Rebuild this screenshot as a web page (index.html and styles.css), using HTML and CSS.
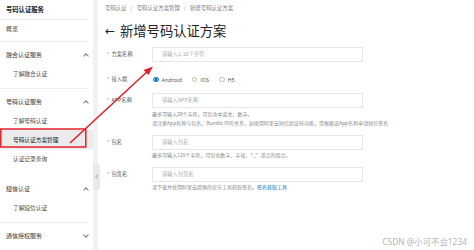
FILE: index.html
```html
<!DOCTYPE html>
<html lang="zh">
<head>
<meta charset="utf-8">
<link rel="stylesheet" href="styles.css">
</head>
<body>
<div class="page">
  <aside class="sidebar">
    <div class="side-title">号码认证服务</div>
    <div class="side-top">概览</div>
    <div class="group">
      <div class="group-head">融合认证服务<span class="chev up"></span></div>
      <div class="sub">了解融合认证</div>
    </div>
    <div class="group nodiv">
      <div class="group-head">号码认证服务<span class="chev up"></span></div>
      <div class="sub">了解号码认证</div>
      <div class="sub active">号码认证方案管理</div>
      <div class="sub">认证记录查询</div>
    </div>
    <div class="group">
      <div class="group-head">短信认证<span class="chev up"></span></div>
      <div class="sub">了解短信认证</div>
    </div>
    <div class="group">
      <div class="group-head">通信授权服务<span class="chev down"></span></div>
    </div>
  </aside>
  <div class="gutter"><div class="collapse-tab"><span class="tab-chev"></span></div></div>
  <main class="main">
    <div class="crumbs">号码认证<span class="sep">/</span>号码认证方案管理<span class="sep">/</span>新增号码认证方案</div>
    <h1 class="title"><span class="back">←</span>新增号码认证方案</h1>
    <div class="form">
      <div class="item">
        <div class="label"><i>*</i>方案名称</div>
        <div class="ctrl"><div class="input">请输入1-10个字符</div></div>
      </div>
      <div class="item radios-item">
        <div class="label"><i>*</i>接入端</div>
        <div class="ctrl radios">
          <span class="radio on"></span><span class="rtext">Android</span>
          <span class="radio"></span><span class="rtext">iOS</span>
          <span class="radio"></span><span class="rtext">H5</span>
        </div>
      </div>
      <div class="item">
        <div class="label"><i>*</i>APP名称</div>
        <div class="ctrl">
          <div class="input">请输入APP名称</div>
          <div class="help">最多可输入20个字符，可包含中英文、数字。</div>
          <div class="help">请注意App名称与包名、Bundle ID的关系，如使用阿里云短信验证码功能，需根据该App名称申请短信签名</div>
        </div>
      </div>
      <div class="item">
        <div class="label"><i>*</i>包名</div>
        <div class="ctrl">
          <div class="input">请输入包名</div>
          <div class="help">最多可输入128个字符，可包含数字、字母、“_”或点的组合。</div>
        </div>
      </div>
      <div class="item">
        <div class="label"><i>*</i>包签名</div>
        <div class="ctrl">
          <div class="input">请输入包签名</div>
          <div class="help">请下载并使用阿里云提供的官方工具获取签名。<span class="link">签名获取工具</span></div>
        </div>
      </div>
    </div>
  </main>
  <svg class="annot" width="474" height="250" viewBox="0 0 474 250">
    <rect x="0.8" y="129" width="85" height="18" fill="none" stroke="#e3202a" stroke-width="1.5"/>
    <line x1="70" y1="143" x2="150" y2="69" stroke="#e3202a" stroke-width="1.6"/>
    <polygon points="153,66.5 143.5,70 148.5,75" fill="#e3202a"/>
  </svg>
  <div class="watermark">CSDN @小可不会1234</div>
</div>
</body>
</html>
```

FILE: styles.css
```css
* { box-sizing: border-box; margin: 0; padding: 0; }
html, body { width: 474px; height: 250px; overflow: hidden; background: #fff; }
body { font-family: "Noto Sans CJK SC", "Noto Sans", sans-serif; color: #333; }
.page { position: relative; display: flex; width: 474px; height: 250px; }

.sidebar { width: 93px; flex: none; background: #fff; font-size: 6px; color: #333; }
.side-title { height: 20px; line-height: 19px; padding-left: 6px; font-size: 6.3px; font-weight: 700; color: #222; border-bottom: 1px solid #ececec; margin: 0 4px 0 0; }
.side-top { height: 22px; line-height: 18px; padding-left: 6px; border-bottom: 1px solid #ececec; margin-right: 4px; color: #444; }
.group { padding: 4px 0 5px; border-bottom: 1px solid #ececec; margin-right: 4px; }
.group.nodiv { border-bottom: none; padding-bottom: 8px; }
.group-head { position: relative; height: 18px; line-height: 18px; padding-left: 6px; }
.sub { height: 19px; line-height: 19px; padding-left: 13px; color: #444; font-size: 5.7px; }
.sub.active { background: #ebebeb; margin-right: -4px; color: #222; }
.chev { position: absolute; right: 1px; top: 7px; width: 4px; height: 4px; border-left: 0.8px solid #777; border-top: 0.8px solid #777; }
.chev.up { transform: rotate(45deg); top: 8px; }
.chev.down { transform: rotate(225deg); top: 6px; }

.gutter { position: relative; width: 5px; flex: none; background: #f2f2f2; }
.collapse-tab { position: absolute; left: 0; top: 164px; width: 7px; height: 26px; background: #e9e9e9; border-radius: 0 3px 3px 0; }
.tab-chev { position: absolute; left: 3px; top: 11px; width: 3px; height: 3px; border-left: 0.8px solid #aaa; border-bottom: 0.8px solid #aaa; transform: rotate(45deg); }

.main { flex: 1; padding-left: 7px; background: #fff; }
.crumbs { margin-top: 3px; height: 10px; line-height: 10px; font-size: 5.4px; color: #777; }
.sep { margin: 0 4px; color: #999; }
.title { margin-top: 9px; height: 18px; line-height: 18px; font-size: 13.3px; font-weight: 400; color: #222; display: flex; align-items: center; }
.back { width: 15px; font-size: 12px; font-family: "DejaVu Sans", sans-serif; }

.form { margin-top: 7px; }
.item { display: flex; margin-bottom: 7px; }
.label { width: 47px; flex: none; padding-left: 2px; height: 15px; line-height: 15px; font-size: 5.3px; color: #555; }
.label i { font-style: normal; color: #888; margin-right: 2px; }
.ctrl { width: 211px; }
.input { height: 15px; border: 0.8px solid #e6e6e6; line-height: 13.4px; padding-left: 9px; font-size: 5.3px; color: #aaa; }
.help { height: 9.5px; line-height: 9.5px; font-size: 5px; color: #888; white-space: nowrap; }
.item .input + .help { margin-top: 0.5px; }
.link { color: #0070cc; }

.radios-item { margin-top: 10px; margin-bottom: 6px; }
.radios { display: flex; align-items: center; height: 15px; padding-left: 1px; }
.radio { width: 5.6px; height: 5.6px; border: 0.7px solid #bbb; border-radius: 50%; flex: none; }
.radio.on { border-color: #0070cc; background: radial-gradient(circle, #0070cc 0 1.4px, #fff 1.6px); }
.rtext { font-size: 5.4px; color: #555; margin: 0 10px 0 3px; font-family: "Noto Sans", sans-serif; }

.annot { position: absolute; left: 0; top: 0; pointer-events: none; }
.watermark { position: absolute; right: 7px; bottom: 3px; font-size: 8.4px; color: #b5b5b5; font-family: "Noto Sans", "Noto Sans CJK SC", sans-serif; }
```
